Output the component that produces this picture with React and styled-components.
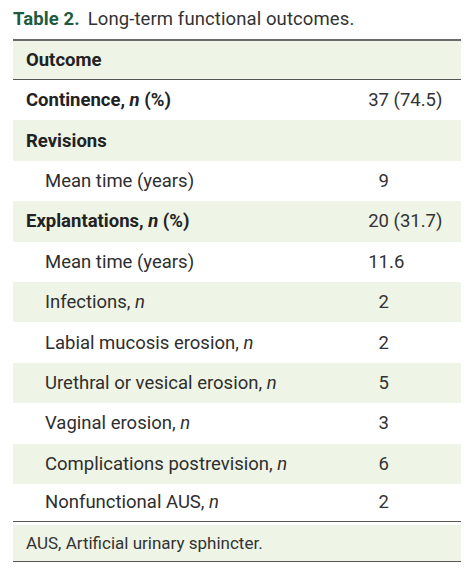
import React from "react";
import styled, { createGlobalStyle } from "styled-components";

const Global = createGlobalStyle`
  body {
    margin: 0;
    background: #ffffff;
    font-family: Roboto, "Liberation Sans", sans-serif;
    color: #2b2b2b;
  }
`;

const Page = styled.div`
  width: 474px;
  padding: 8px 13px 0 13px;
  box-sizing: border-box;
`;

const Caption = styled.div`
  font-size: 18.5px;
  line-height: 22px;
  height: 30px;
  color: #333;
  letter-spacing: 0.1px;
`;

const CaptionLabel = styled.span`
  font-weight: 700;
  color: #1e5b3f;
  margin-right: 8px;
`;

const Table = styled.div`
  border-top: 2px solid #6b6b6b;
  margin-top: 1px;
`;

const Row = styled.div`
  display: flex;
  align-items: center;
  height: ${(p) => p.h || 40.4}px;
  background: ${(p) => (p.shaded ? "#eef4e6" : "#ffffff")};
  border-bottom: ${(p) => (p.rule ? "1.5px solid #555" : "none")};
  font-size: 18.5px;
`;

const Label = styled.div`
  flex: 1;
  padding-left: ${(p) => (p.indent ? 32 : 13)}px;
  font-weight: ${(p) => (p.bold ? 700 : 400)};
  color: ${(p) => (p.bold ? "#222" : "#2e2e2e")};
`;

const Value = styled.div`
  width: 101px;
  display: flex;
  color: #333;
`;

const IntPart = styled.span`
  width: 29px;
  text-align: right;
`;

const Rest = styled.span`
  white-space: pre;
`;

const Gap = styled.div`
  height: 3px;
`;

const Note = styled.div`
  display: flex;
  align-items: center;
  height: 36px;
  background: #eef4e6;
  padding-left: 13px;
  font-size: 17px;
  color: #333;
  border-bottom: 1.5px solid #555;
`;

const rows = [
  { label: "Continence", n: true, pct: true, bold: true, int: "37", rest: " (74.5)" },
  { label: "Revisions", bold: true, shaded: true },
  { label: "Mean time (years)", indent: true, int: "9" },
  { label: "Explantations", n: true, pct: true, bold: true, shaded: true, int: "20", rest: " (31.7)" },
  { label: "Mean time (years)", indent: true, int: "11", rest: ".6" },
  { label: "Infections", n: true, indent: true, shaded: true, int: "2" },
  { label: "Labial mucosis erosion", n: true, indent: true, int: "2" },
  { label: "Urethral or vesical erosion", n: true, indent: true, shaded: true, int: "5" },
  { label: "Vaginal erosion", n: true, indent: true, int: "3" },
  { label: "Complications postrevision", n: true, indent: true, shaded: true, int: "6" },
  { label: "Nonfunctional AUS", n: true, indent: true, int: "2", h: 37, rule: true },
];

export default function App() {
  return (
    <Page>
      <Global />
      <Caption>
        <CaptionLabel>Table 2.</CaptionLabel>Long-term functional outcomes.
      </Caption>
      <Table>
        <Row shaded rule h={38}>
          <Label bold>Outcome</Label>
        </Row>
        {rows.map((r, i) => (
          <Row key={i} shaded={r.shaded} h={r.h} rule={r.rule}>
            <Label bold={r.bold} indent={r.indent}>
              {r.label}
              {r.n && (
                <>
                  , <i>n</i>
                  {r.pct && " (%)"}
                </>
              )}
            </Label>
            {r.int && (
              <Value>
                <IntPart>{r.int}</IntPart>
                {r.rest && <Rest>{r.rest}</Rest>}
              </Value>
            )}
          </Row>
        ))}
        <Gap />
        <Note>AUS, Artificial urinary sphincter.</Note>
      </Table>
    </Page>
  );
}
